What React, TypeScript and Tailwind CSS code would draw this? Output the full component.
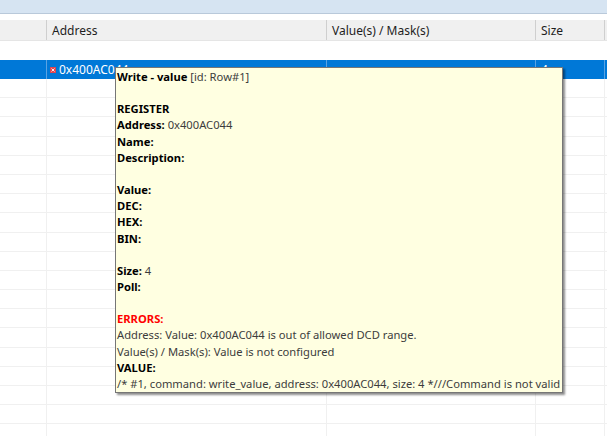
import React from 'react';

const cols = 'grid grid-cols-[47px_280px_209px_69px_1fr]';

function ErrIcon() {
    return (
        <span className="inline-flex w-[6px] h-[6px] bg-[#e0454f] items-center justify-center mr-[3px] shrink-0">
            <svg width="4" height="4" viewBox="0 0 4 4">
                <path d="M0.5 0.5 L3.5 3.5 M3.5 0.5 L0.5 3.5" stroke="#fff" strokeWidth="0.9" />
            </svg>
        </span>
    );
}

function EmptyRow() {
    return (
        <div className={`${cols} h-[19.2px] border-b border-[#f0f0f0]`}>
            <div className="border-r border-[#f0f0f0]" />
            <div className="border-r border-[#f0f0f0]" />
            <div className="border-r border-[#f0f0f0]" />
            <div className="border-r border-[#f0f0f0]" />
            <div />
        </div>
    );
}

export default function App() {
    const rows = Array.from({ length: 19 });

    return (
        <div className="relative w-[607px] h-[436px] overflow-hidden bg-white text-[12px] font-['Noto_Sans','Open_Sans',sans-serif]">
            {/* title strip */}
            <div className="h-[14px] bg-[#d6e4f2] border-b border-[#b9c9da]" />
            <div className="h-[6px] bg-white" />

            {/* column header */}
            <div className={`${cols} h-[21px] bg-[#f0f0f0] border-b border-[#e5e5e5] text-[#1e1e1e]`}>
                <div className="border-r border-[#cfcfcf]" />
                <div className="border-r border-[#cfcfcf] pl-[5px] pt-[2px] flex items-center">Address</div>
                <div className="border-r border-[#cfcfcf] pl-[5px] pt-[2px] flex items-center">Value(s) / Mask(s)</div>
                <div className="border-r border-[#cfcfcf] pl-[5px] pt-[2px] flex items-center">Size</div>
                <div />
            </div>

            <div className="h-[19px] bg-white" />

            {/* selected row */}
            <div className={`${cols} h-[19px] bg-[#0078d7] text-white`}>
                <div className="border-r border-[#5aa3e3]" />
                <div className="border-r border-[#5aa3e3] pl-[3px] flex items-center">
                    <ErrIcon />
                    <span>0x400AC044</span>
                </div>
                <div className="border-r border-[#5aa3e3] pl-[4px] flex items-center">
                    <ErrIcon />
                </div>
                <div className="border-r border-[#5aa3e3] pl-[5px] flex items-center">4</div>
                <div />
            </div>

            {rows.map((_, i) => (
                <EmptyRow key={i} />
            ))}

            {/* tooltip */}
            <div className="absolute left-[115px] top-[67px] w-[448px] border border-[#767676] bg-[#ffffe1] shadow-[2px_2px_2px_rgba(0,0,0,0.45)] pl-[1px] pt-[1px] text-[11.2px] leading-[16.15px] text-[#3c3c3c] whitespace-nowrap">
                <div><b className="text-black">Write - value</b> [id: Row#1]</div>
                <div className="h-[16.15px]" />
                <div><b className="text-black">REGISTER</b></div>
                <div><b className="text-black">Address:</b> 0x400AC044</div>
                <div><b className="text-black">Name:</b></div>
                <div><b className="text-black">Description:</b></div>
                <div className="h-[16.15px]" />
                <div><b className="text-black">Value:</b></div>
                <div><b className="text-black">DEC:</b></div>
                <div><b className="text-black">HEX:</b></div>
                <div><b className="text-black">BIN:</b></div>
                <div className="h-[16.15px]" />
                <div><b className="text-black">Size:</b> 4</div>
                <div><b className="text-black">Poll:</b></div>
                <div className="h-[16.15px]" />
                <div><b className="text-[#f00]">ERRORS:</b></div>
                <div>Address: Value: 0x400AC044 is out of allowed DCD range.</div>
                <div>Value(s) / Mask(s): Value is not configured</div>
                <div><b className="text-black">VALUE:</b></div>
                <div>/* #1, command: write_value, address: 0x400AC044, size: 4 *///Command is not valid</div>
            </div>
        </div>
    );
}
